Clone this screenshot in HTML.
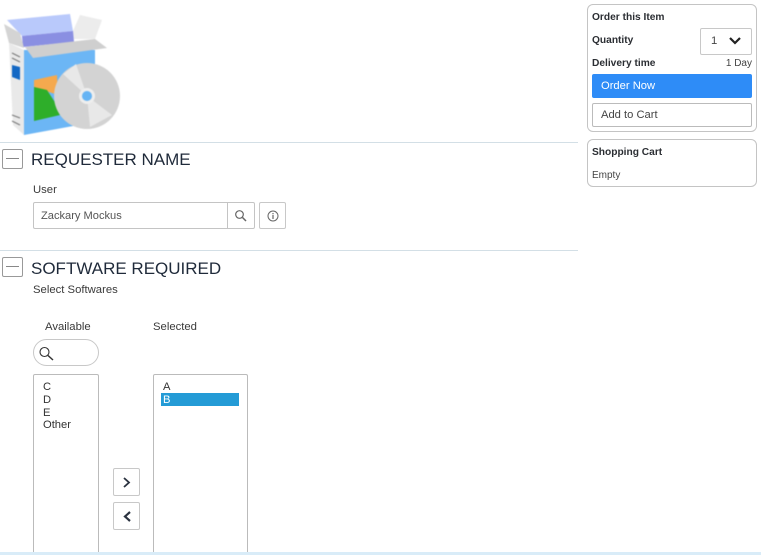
<!DOCTYPE html>
<html>
<head>
<meta charset="utf-8">
<style>
html,body{margin:0;padding:0;background:#fff;height:555px;overflow:hidden}
body{width:761px;position:relative;font-family:"Liberation Sans",sans-serif;color:#333}
.a{position:absolute;white-space:nowrap}
.box{position:absolute;box-sizing:border-box;background:#fff}
.b{font-weight:bold;font-size:10.2px;color:#2b2e33}
.h{font-size:17px;color:#1f2a3a;line-height:20px}
.t{font-size:11.3px;color:#3a3a3a;line-height:13px}
.col{position:absolute;box-sizing:border-box;width:21px;height:20px;border:1.5px solid #999;border-radius:2px;left:1.500px}
.col:after{content:"";position:absolute;left:3px;right:3px;top:8px;height:1px;background:#888}
.hr{position:absolute;left:0;width:578px;height:1px;background:#d3dfe6}
</style>
</head>
<body>
<svg class="a" style="left:0;top:0;filter:blur(.5px)" width="140" height="140" viewBox="0 0 140 140">
<polygon points="73,31 80,15 102,20 95,39 73,39" fill="#ececec"/>
<polygon points="7,20 70,14 73,31 22,36" fill="#b9c9fb"/>
<polygon points="22,36 73,31 74,42 23,47" fill="#8a8fe2"/>
<polygon points="4,24 20,33 24,48 9,43" fill="#d4d4d4"/>
<polygon points="24,135 95,122 95,50 24,50" fill="#6cb6f5"/>
<polygon points="9,43 24,50 24,135 13,125" fill="#e9e9e9"/>
<polygon points="25,47 95,39 107,48 33,58" fill="#cfcfcf"/>
<polygon points="12,65 20,67 20,80 12,77" fill="#1468c4"/>
<polygon points="34,80 57,75 58,95 34,87" fill="#f5a94e"/>
<polygon points="34,87 47,90 58,107 60,115 34,121" fill="#2eae2a"/>
<g stroke="#777" stroke-width="1" fill="none"><path d="M12 53l8 4M12 58l8 4M12 115l8 3M12 121l8 4"/></g>
<circle cx="87" cy="96" r="33" fill="#d3d3d3"/>
<polygon points="63,74 76,64 87,96" fill="#e8e8e8"/>
<polygon points="90,127 112,115 87,96" fill="#e8e8e8"/>
<circle cx="87" cy="96" r="8" fill="#eee"/>
<circle cx="87" cy="96" r="5" fill="#66b4f4"/>
</svg>

<div class="box" style="left:587px;top:4px;width:170px;height:128px;border:1px solid #c4c4c4;border-radius:6px"></div>
<div class="a b" style="left:592px;top:12px">Order this Item</div>
<div class="a b" style="left:592px;top:35px">Quantity</div>
<div class="box" style="left:700px;top:28px;width:52px;height:27px;border:1px solid #c8c8c8;border-radius:2px"></div>
<div class="a t" style="left:711px;top:35px;color:#444">1</div>
<svg class="a" style="left:729px;top:36px" width="12" height="10"><path d="M1 2L6 7L11 2" fill="none" stroke="#222" stroke-width="2.200"/></svg>
<div class="a b" style="left:592px;top:58px">Delivery time</div>
<div class="a" style="right:9px;top:58px;font-size:10px;color:#444">1 Day</div>
<div class="box" style="left:592px;top:74px;width:160px;height:24px;background:#2e8cf7;border-radius:2px"></div>
<div class="a" style="left:601px;top:80px;font-size:11.200px;line-height:13px;color:#fff">Order Now</div>
<div class="box" style="left:592px;top:103px;width:160px;height:24px;border:1px solid #bbb;border-radius:2px"></div>
<div class="a" style="left:601px;top:108.500px;font-size:11.200px;line-height:13px;color:#444">Add to Cart</div>
<div class="box" style="left:587px;top:139px;width:170px;height:48px;border:1px solid #c4c4c4;border-radius:6px"></div>
<div class="a b" style="left:592px;top:147px">Shopping Cart</div>
<div class="a" style="left:592px;top:170px;font-size:10px;color:#444">Empty</div>

<div class="hr" style="top:142px"></div>
<div class="col" style="top:149px"></div>
<div class="a h" style="left:31px;top:150px">REQUESTER NAME</div>
<div class="a t" style="left:33px;top:184px">User</div>
<div class="box" style="left:33px;top:202px;width:222px;height:27px;border:1px solid #c4c4c4;border-radius:2px"></div>
<div class="box" style="left:227px;top:203px;width:1px;height:25px;background:#c4c4c4"></div>
<div class="a" style="left:41px;top:210px;font-size:11.100px;color:#555;line-height:13px">Zackary Mockus</div>
<svg class="a" style="left:234px;top:209px" width="14" height="14"><circle cx="5.500" cy="5.500" r="3.800" fill="none" stroke="#666" stroke-width="1.200"/><path d="M8.500 8.500L12 12" stroke="#666" stroke-width="1.500"/></svg>
<div class="box" style="left:259px;top:202px;width:27px;height:27px;border:1px solid #c8c8c8;border-radius:2px"></div>
<svg class="a" style="left:266px;top:209px" width="14" height="14"><circle cx="7" cy="7" r="5" fill="none" stroke="#666"/><path d="M7 6v4M7 4v1.200" stroke="#666" stroke-width="1.200"/></svg>

<div class="hr" style="top:250px"></div>
<div class="col" style="top:257px"></div>
<div class="a h" style="left:31px;top:259px">SOFTWARE REQUIRED</div>
<div class="a t" style="left:33px;top:284px">Select Softwares</div>

<div class="a t" style="left:45px;top:321px">Available</div>
<div class="a t" style="left:153px;top:321px">Selected</div>
<div class="box" style="left:33px;top:339px;width:66px;height:27px;border:1px solid #c8c8c8;border-radius:14px"></div>
<svg class="a" style="left:38px;top:346px" width="17" height="16"><circle cx="6.500" cy="6" r="4.500" fill="none" stroke="#333" stroke-width="1.100"/><path d="M10 9.500L15 14" stroke="#333" stroke-width="1.500"/></svg>
<div class="box" style="left:33px;top:374px;width:66px;height:178px;border:1px solid #bbb;border-bottom:0;border-radius:2px 2px 0 0"></div>
<div class="a" style="left:43px;top:381px;font-size:11.200px;line-height:12.800px;color:#333">C<br>D<br>E<br>Other</div>
<div class="box" style="left:153px;top:374px;width:95px;height:178px;border:1px solid #bbb;border-bottom:0;border-radius:2px 2px 0 0"></div>
<div class="box" style="left:161px;top:393px;width:78px;height:13px;background:#249bd6"></div>
<div class="a" style="left:163px;top:381px;font-size:11.200px;line-height:13px;color:#333">A<br><span style="color:#fff">B</span></div>
<div class="box" style="left:113px;top:468px;width:27px;height:28px;border:1px solid #c8c8c8;border-radius:2px"></div>
<svg class="a" style="left:121px;top:476px" width="12" height="13"><path d="M3 2l5 4.500L3 11" fill="none" stroke="#2b3340" stroke-width="1.800"/></svg>
<div class="box" style="left:113px;top:502px;width:27px;height:28px;border:1px solid #c8c8c8;border-radius:2px"></div>
<svg class="a" style="left:121px;top:510px" width="12" height="13"><path d="M9 2L4 6.500L9 11" fill="none" stroke="#2b3340" stroke-width="2.200"/></svg>
<div class="a" style="left:0;top:552px;width:761px;height:3px;background:#d9ecf8"></div>
</body>
</html>
